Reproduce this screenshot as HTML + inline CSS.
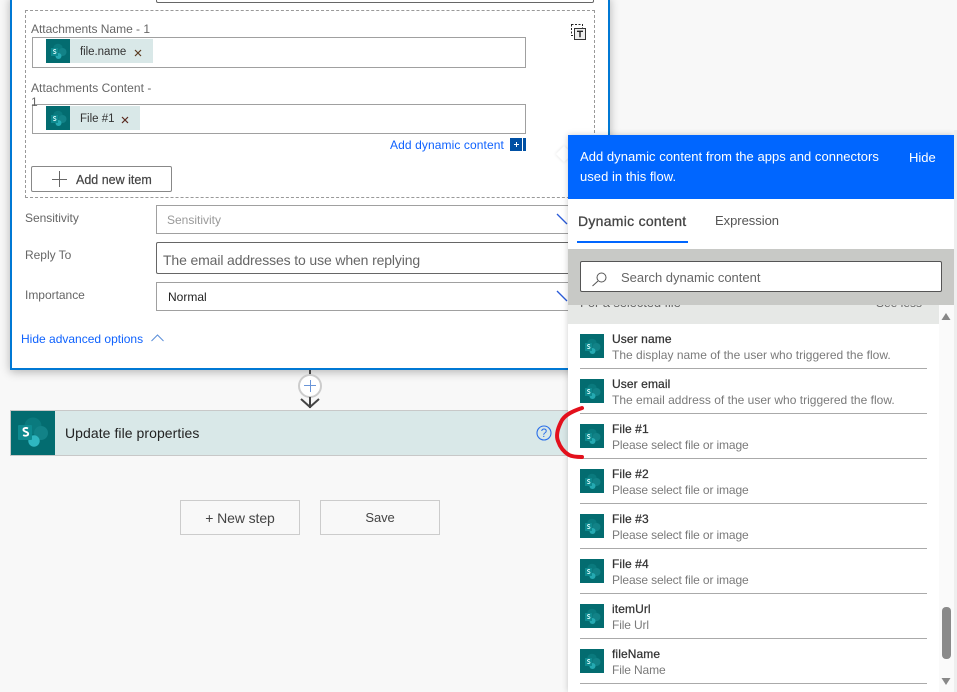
<!DOCTYPE html>
<html><head><meta charset="utf-8">
<style>
html,body{margin:0;padding:0}
body{width:957px;height:692px;position:relative;overflow:hidden;background:#f8f8f8;font-family:"Liberation Sans",sans-serif;font-size:12px;color:#333}
div,span,svg{position:absolute;box-sizing:border-box}
.t{white-space:nowrap;line-height:16px;height:16px}
.l{color:#666;letter-spacing:-.02px}
.in{background:#fff;border:1px solid #a0a0a0}
.chip{background:#d9e8e8;height:24px;top:0}
.ti{color:#333;font-size:12px;left:612px;letter-spacing:.1px;-webkit-text-stroke:.25px #333}
.su{color:#7a7a7a;left:612px;letter-spacing:-.13px}
.lg{letter-spacing:.01px}
.sep{left:580px;width:347px;height:1px;background:#aaa}
.ic{left:580px;width:24px;height:24px}
</style></head><body>
<svg width="0" height="0" style="left:0;top:0"><symbol id="sp" viewBox="0 0 24 24"><rect width="24" height="24" fill="#036c70"/><circle cx="12" cy="9.5" r="4.8" fill="#0a7a7e"/><circle cx="16.5" cy="13" r="4" fill="#128287"/><circle cx="12.5" cy="17" r="3" fill="#25aab2"/><rect x="5" y="9" width="7" height="8" fill="#0e8a8f"/><path d="M10 10.8c-1-.5-2.5-.3-2.5.7 0 1.2 2.5.8 2.5 2 0 1.1-1.7 1.3-2.7.7" fill="none" stroke="#e6ffff" stroke-width=".9"/></symbol></svg>

<!-- left shadow & card -->
<div style="left:10px;top:-4px;width:600px;height:374px;background:#fff;border:2px solid #0078d4;box-shadow:0 2px 9px rgba(0,0,0,.28)"></div>
<div style="left:156px;top:-10px;width:438px;height:13px;background:#fff;border:1px solid #666;border-radius:2px"></div>
<div style="left:25px;top:10px;width:570px;height:188px;border:1px dashed #999"></div>

<div class="t l" style="left:31px;top:21px">Attachments Name - 1</div>
<div class="in" style="left:32px;top:37px;width:494px;height:31px"></div>
<div class="chip" style="left:46px;top:39px;width:107px"></div>
<svg class="x" style="left:46px;top:39px" width="24" height="24"><use href="#sp"/></svg>
<div class="t" style="left:80px;top:44px;font-size:11.5px;letter-spacing:-.05px">file.name</div>
<svg style="left:134px;top:49px" width="8" height="8"><path d="M1 1l6 6M7 1L1 7" stroke="#5a3a20" stroke-width="1.2"/></svg>

<div class="t l" style="left:31px;top:80px;letter-spacing:.05px">Attachments Content -</div>
<div class="in" style="left:32px;top:104px;width:494px;height:30px"></div>
<div class="t l" style="left:31px;top:94px;background:none">1</div>
<div class="chip" style="left:46px;top:106px;width:94px"></div>
<svg style="left:46px;top:106px" width="24" height="24"><use href="#sp"/></svg>
<div class="t" style="left:80px;top:111px;font-size:11.5px">File #1</div>
<svg style="left:121px;top:116px" width="8" height="8"><path d="M1 1l6 6M7 1L1 7" stroke="#5a2a20" stroke-width="1.2"/></svg>

<div class="t" style="left:390px;top:137px;color:#0f62fe;letter-spacing:.1px">Add dynamic content</div>
<div style="left:510px;top:138px;width:12px;height:13px;background:#0050a4"></div>
<div style="left:523px;top:138px;width:3px;height:13px;background:#0050a4"></div>
<div style="left:514px;top:144px;width:5px;height:1px;background:#fff"></div>
<div style="left:516px;top:142px;width:1px;height:5px;background:#fff"></div>

<svg style="left:570px;top:23px" width="18" height="18"><rect x="1.5" y="1.5" width="11" height="11" fill="none" stroke="#222" stroke-dasharray="2 1.5"/><rect x="4.5" y="5.5" width="11" height="11" fill="#eee" stroke="#333"/><path d="M7 8.3h6M10 8.3v6" stroke="#222" stroke-width="1.4" fill="none"/></svg>

<div style="left:31px;top:166px;width:141px;height:26px;background:#fff;border:1px solid #888;border-radius:2px"></div>
<div style="left:52px;top:179px;width:15px;height:1px;background:#666"></div>
<div style="left:59px;top:171px;width:1px;height:16px;background:#666"></div>
<div class="t" style="left:76px;top:172px;font-size:12.5px;color:#444;letter-spacing:0;-webkit-text-stroke:.2px #444">Add new item</div>

<div class="t l" style="left:25px;top:210px">Sensitivity</div>
<div class="in" style="left:156px;top:205px;width:438px;height:29px"></div>
<div class="t" style="left:167px;top:212px;color:#999">Sensitivity</div>
<div class="t l" style="left:25px;top:247px">Reply To</div>
<div style="left:156px;top:242px;width:438px;height:32px;background:#fff;border:1px solid #666;border-radius:2px"></div>
<div class="t" style="left:163px;top:252px;font-size:14px;color:#666;letter-spacing:-.13px">The email addresses to use when replying</div>
<div class="t l" style="left:25px;top:287px">Importance</div>
<div class="in" style="left:156px;top:282px;width:438px;height:29px"></div>
<div class="t" style="left:168px;top:289px;color:#222">Normal</div>
<svg style="left:555px;top:212px" width="14" height="14"><path d="M2 2l10 10" stroke="#2a5bd8" stroke-width="1.3"/></svg>
<svg style="left:555px;top:289px" width="14" height="14"><path d="M2 2l10 10" stroke="#2a5bd8" stroke-width="1.3"/></svg>

<div class="t" style="left:21px;top:331px;color:#0f62fe;letter-spacing:0">Hide advanced options</div>
<svg style="left:150px;top:333px" width="15" height="10"><path d="M1.5 8L7.5 2l6 6" fill="none" stroke="#5a8ed8" stroke-width="1"/></svg>

<!-- connector -->
<div style="left:309px;top:370px;width:2px;height:6px;background:#444"></div>
<div style="left:298px;top:374px;width:24px;height:24px;border-radius:50%;background:#fff;border:2px solid #ccc"></div>
<div style="left:304px;top:385px;width:12px;height:1px;background:#6a95d8"></div>
<div style="left:310px;top:380px;width:1px;height:12px;background:#6a95d8"></div>
<svg style="left:299px;top:396px" width="22" height="15"><path d="M2 3l9 8 9-8M11 1v11" fill="none" stroke="#444" stroke-width="2"/></svg>

<!-- update card -->
<div style="left:10px;top:410px;width:560px;height:46px;background:#d9e8e8;border:1px solid #c8c8c8"></div>
<div style="left:11px;top:411px;width:44px;height:44px;background:#036c70"></div>
<svg style="left:11px;top:411px" width="44" height="44" viewBox="0 0 44 44"><circle cx="22" cy="15" r="8.5" fill="#0a7a7e"/><circle cx="30" cy="22" r="7" fill="#128287"/><circle cx="23" cy="30" r="5.7" fill="#2fb6c0"/><rect x="7" y="14" width="14" height="15" rx="1" fill="#0e8a8f"/><path d="M17 17.5c-1.8-1-4.6-.6-4.6 1.3 0 2.4 4.8 1.5 4.8 4 0 2.1-3.2 2.5-5 1.2" fill="none" stroke="#fff" stroke-width="1.8"/></svg>
<div class="t" style="left:65px;top:425px;font-size:14px;color:#222;letter-spacing:.06px">Update file properties</div>
<svg style="left:536px;top:425px" width="16" height="16"><circle cx="8" cy="8" r="7" fill="none" stroke="#2a6fe8" stroke-width="1.1"/><text x="8" y="12.2" font-size="11.5" text-anchor="middle" fill="#2a6fe8" font-family="Liberation Sans">?</text></svg>

<div style="left:180px;top:500px;width:120px;height:35px;border:1px solid #ccc"></div>
<div class="t" style="left:180px;top:510px;width:120px;text-align:center;font-size:14px;color:#444;letter-spacing:-.1px">+ New step</div>
<div style="left:320px;top:500px;width:120px;height:35px;border:1px solid #ccc"></div>
<div class="t" style="left:320px;top:510px;width:120px;text-align:center;font-size:13px;color:#444;letter-spacing:-.1px">Save</div>

<!-- panel -->
<div style="left:556px;top:146px;width:16px;height:16px;background:#fff;transform:rotate(45deg) scale(.72);box-shadow:0 0 5px rgba(0,0,0,.12)"></div>
<div style="left:567.5px;top:135px;width:386.5px;height:557px;background:#fff;box-shadow:0 0 6px rgba(0,0,0,.2)"></div>
<div style="left:954px;top:130px;width:3px;height:562px;background:#eee"></div>
<div style="left:568px;top:135px;width:386px;height:64px;background:#0066ff"></div>
<div class="t" style="left:580px;top:149px;color:#fff;font-size:13px;letter-spacing:.04px">Add dynamic content from the apps and connectors</div>
<div class="t" style="left:580px;top:169px;color:#fff;font-size:13px;letter-spacing:.04px">used in this flow.</div>
<div class="t" style="left:909px;top:150px;color:#fff;font-size:13px">Hide</div>

<div class="t" style="left:578px;top:213px;font-size:14px;color:#444;letter-spacing:.28px;-webkit-text-stroke:.3px #444">Dynamic content</div>
<div style="left:577px;top:241px;width:111px;height:2px;background:#0066ff"></div>
<div class="t" style="left:715px;top:213px;font-size:13px;color:#555;letter-spacing:-.03px">Expression</div>

<div style="left:568px;top:305px;width:371px;height:19px;background:#e6e8e6"></div>
<div style="left:939px;top:305px;width:15px;height:387px;background:#fafafa"></div>
<div class="t" style="left:580px;top:295px;color:#666;font-size:13px;letter-spacing:-.1px">For a selected file</div>
<div class="t" style="left:876px;top:295px;color:#666;font-size:12px">See less</div>
<div style="left:568px;top:249px;width:386px;height:56px;background:#c8c9c6"></div>
<div style="left:580px;top:261px;width:362px;height:31px;background:#fff;border:1px solid #555;border-radius:2px"></div>
<svg style="left:591px;top:272px" width="17" height="16"><circle cx="10.5" cy="5.5" r="4.5" fill="none" stroke="#555" stroke-width="1"/><path d="M7 9L1.5 14" stroke="#555" stroke-width="1"/></svg>
<div class="t" style="left:621px;top:269.5px;color:#666;font-size:13px;letter-spacing:0">Search dynamic content</div>

<svg style="left:941px;top:312px" width="10" height="9"><path d="M5 1l4.5 7H.5z" fill="#888"/></svg>
<div style="left:942px;top:607px;width:9px;height:52px;background:#8a8a8a;border-radius:4px"></div>
<svg style="left:941px;top:677px" width="10" height="9"><path d="M.5 1h9L5 8z" fill="#888"/></svg>

<svg class="ic" style="top:334px"><use href="#sp"/></svg>
<div class="t ti" style="top:331px">User name</div>
<div class="t su lg" style="top:347px">The display name of the user who triggered the flow.</div>
<div class="sep" style="top:368px"></div>

<svg class="ic" style="top:379px"><use href="#sp"/></svg>
<div class="t ti" style="top:376px">User email</div>
<div class="t su lg" style="top:392px">The email address of the user who triggered the flow.</div>
<div class="sep" style="top:413px"></div>

<svg class="ic" style="top:424px"><use href="#sp"/></svg>
<div class="t ti" style="top:421px">File #1</div>
<div class="t su" style="top:437px">Please select file or image</div>
<div class="sep" style="top:458px"></div>

<svg class="ic" style="top:469px"><use href="#sp"/></svg>
<div class="t ti" style="top:466px">File #2</div>
<div class="t su" style="top:482px">Please select file or image</div>
<div class="sep" style="top:503px"></div>

<svg class="ic" style="top:514px"><use href="#sp"/></svg>
<div class="t ti" style="top:511px">File #3</div>
<div class="t su" style="top:527px">Please select file or image</div>
<div class="sep" style="top:548px"></div>

<svg class="ic" style="top:559px"><use href="#sp"/></svg>
<div class="t ti" style="top:556px">File #4</div>
<div class="t su" style="top:572px">Please select file or image</div>
<div class="sep" style="top:593px"></div>

<svg class="ic" style="top:604px"><use href="#sp"/></svg>
<div class="t ti" style="top:601px">itemUrl</div>
<div class="t su" style="top:617px">File Url</div>
<div class="sep" style="top:638px"></div>

<svg class="ic" style="top:649px"><use href="#sp"/></svg>
<div class="t ti" style="top:646px">fileName</div>
<div class="t su" style="top:662px">File Name</div>
<div class="sep" style="top:683px"></div>

<!-- red annotation -->
<svg style="left:545px;top:400px" width="50" height="65"><path d="M37 8C28 11 19 15 16 22 12 30 11 36 13 41 15 47 19 52 24 55 28 57 33 57 37 57" fill="none" stroke="#e3101c" stroke-width="4" stroke-linecap="round"/></svg>
</body></html>
